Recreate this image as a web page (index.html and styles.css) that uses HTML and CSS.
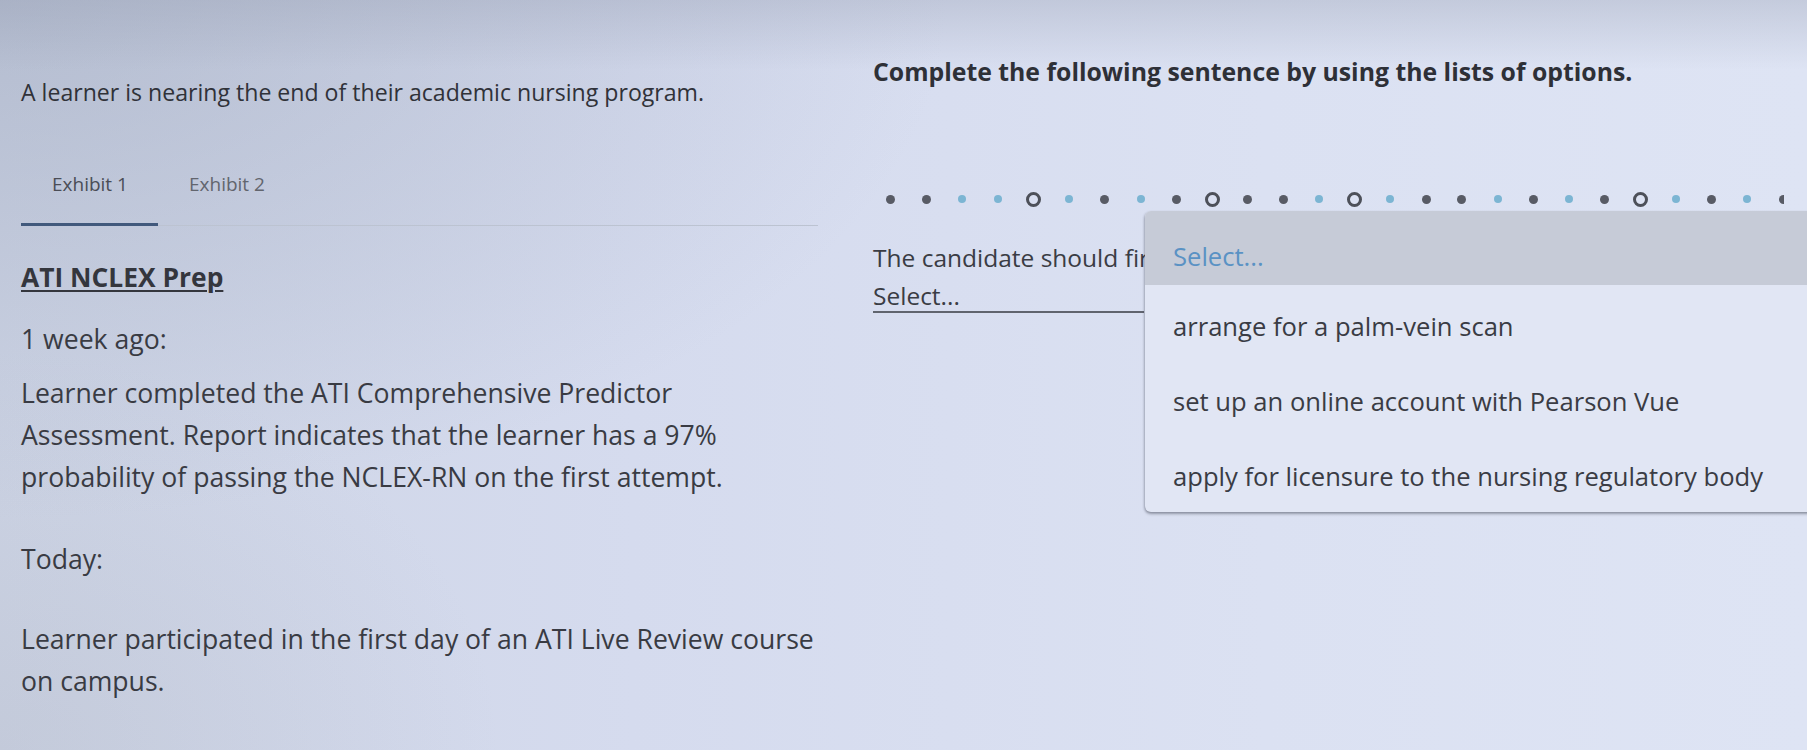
FILE: index.html
```html
<!DOCTYPE html>
<html lang="en">
<head>
<meta charset="utf-8">
<title>Exhibit question</title>
<link rel="stylesheet" href="styles.css">
</head>
<body>
<div class="page">
  <section class="left">
    <p class="intro">A learner is nearing the end of their academic nursing program.</p>
    <nav class="tabs">
      <span class="tab active">Exhibit 1</span>
      <span class="tab">Exhibit 2</span>
    </nav>
    <h2 class="heading">ATI NCLEX Prep</h2>
    <p class="label">1 week ago:</p>
    <p class="para para-first">Learner completed the ATI Comprehensive Predictor Assessment. Report indicates that the learner has a 97% probability of passing the NCLEX-RN on the first attempt.</p>
    <p class="label label-today">Today:</p>
    <p class="para para-second">Learner participated in the first day of an ATI Live Review course on campus.</p>
  </section>
  <section class="right">
    <h1 class="title">Complete the following sentence by using the lists of options.</h1>
    <div class="dots">
      <span class="dot d"></span><span class="dot d"></span><span class="dot b"></span><span class="dot b"></span><span class="dot o"></span><span class="dot b"></span><span class="dot d"></span><span class="dot b"></span><span class="dot d"></span><span class="dot o"></span><span class="dot d"></span><span class="dot d"></span><span class="dot b"></span><span class="dot o"></span><span class="dot b"></span><span class="dot d"></span><span class="dot d"></span><span class="dot b"></span><span class="dot d"></span><span class="dot b"></span><span class="dot d"></span><span class="dot o"></span><span class="dot b"></span><span class="dot d"></span><span class="dot b"></span><span class="dot d"></span>
    </div>
    <p class="sentence">The candidate should first</p>
    <div class="trigger">Select...</div>
    <ul class="menu">
      <li class="option current">Select...</li>
      <li class="option">arrange for a palm-vein scan</li>
      <li class="option">set up an online account with Pearson Vue</li>
      <li class="option">apply for licensure to the nursing regulatory body</li>
    </ul>
  </section>
</div>
</body>
</html>
```

FILE: styles.css
```css
* { box-sizing: border-box; }

html, body {
  margin: 0;
  padding: 0;
  width: 1807px;
  height: 750px;
  overflow: hidden;
}

body {
  font-family: "Open Sans", "Liberation Sans", sans-serif;
  color: #393b43;
  background:
    linear-gradient(180deg, rgba(150,158,178,0.35) 0px, rgba(150,158,178,0) 70px),
    radial-gradient(ellipse 950px 520px at 0 0, rgba(150,160,182,0.45), rgba(150,160,182,0) 100%),
    radial-gradient(ellipse 500px 400px at 0 750px, rgba(170,176,190,0.28), rgba(170,176,190,0) 100%),
    linear-gradient(90deg, #cdd4e5 0%, #d5dbee 35%, #dbe1f2 70%, #dee4f4 100%);
}

.page {
  display: flex;
  gap: 55px;
  padding-left: 21px;
}

/* ---------- left column ---------- */
.left {
  width: 797px;
  flex: none;
}

.intro {
  margin: 0;
  padding-top: 76px;
  font-size: 23.1px;
  line-height: 32px;
  color: #303239;
}

.tabs {
  display: flex;
  margin-top: 62px;
  border-bottom: 1px solid #bcc3d1;
}

.tab {
  width: 137px;
  padding: 0 0 25px 31px;
  font-size: 19px;
  line-height: 28px;
  color: #62656e;
  margin-bottom: -1px;
  border-bottom: 3px solid transparent;
}

.tab.active {
  color: #4a4d56;
  border-bottom-color: #41597c;
}

.heading {
  margin: 30px 0 0;
  font-size: 26.4px;
  line-height: 42px;
  font-weight: 700;
  text-decoration: underline;
  text-decoration-thickness: 2px;
  text-underline-offset: 3px;
  color: #34363d;
}

.label,
.para {
  margin: 0;
  font-size: 26.6px;
  line-height: 42px;
}

.label { margin-top: 20px; }
.para-first { margin-top: 12px; }
.label-today { margin-top: 40px; }
.para-second { margin-top: 38px; }

/* ---------- right column ---------- */
.right {
  position: relative;
  width: 911px;
  flex: none;
}

.title {
  margin: 0;
  padding-top: 55px;
  font-size: 24.8px;
  line-height: 32px;
  font-weight: 700;
  color: #2e3037;
}

.dots {
  display: flex;
  flex-wrap: nowrap;
  align-items: center;
  height: 20px;
  margin-top: 102px;
  overflow: hidden;
}

.dot {
  flex: none;
  width: 35.7px;
  height: 20px;
  display: flex;
  align-items: center;
  justify-content: center;
}

.dot::before {
  content: "";
  display: block;
  border-radius: 50%;
}

.dot.d::before { width: 9px; height: 9px; background: #585b65; }
.dot.b::before { width: 8px; height: 8px; background: #7cb5d3; }
.dot.o::before { width: 9px; height: 9px; border: 3px solid #4d5059; background: transparent; }

.sentence {
  margin: 30px 0 0;
  font-size: 24.5px;
  line-height: 38px;
  white-space: nowrap;
  color: #3a3c44;
}

.trigger {
  width: 271px;
  padding-top: 4px;
  font-size: 24.5px;
  line-height: 30px;
  color: #3a3c44;
  border-bottom: 2px solid #60646e;
}

.menu {
  position: absolute;
  left: 272px;
  top: 211px;
  width: 700px;
  margin: 0;
  padding: 0 0 2px;
  list-style: none;
  background: #e1e6f4;
  border-radius: 6px;
  box-shadow: 0 2px 3px rgba(70,75,90,0.45), -1px 1px 2px rgba(70,75,90,0.2);
  overflow: hidden;
}

.option {
  height: 75px;
  display: flex;
  align-items: center;
  padding-left: 28px;
  padding-top: 7px;
  font-size: 25.6px;
  color: #3a3c44;
  white-space: nowrap;
}

.option.current {
  height: 74px;
  background: #c6cbd7;
  color: #5a92c4;
  padding-top: 16px;
}
```
